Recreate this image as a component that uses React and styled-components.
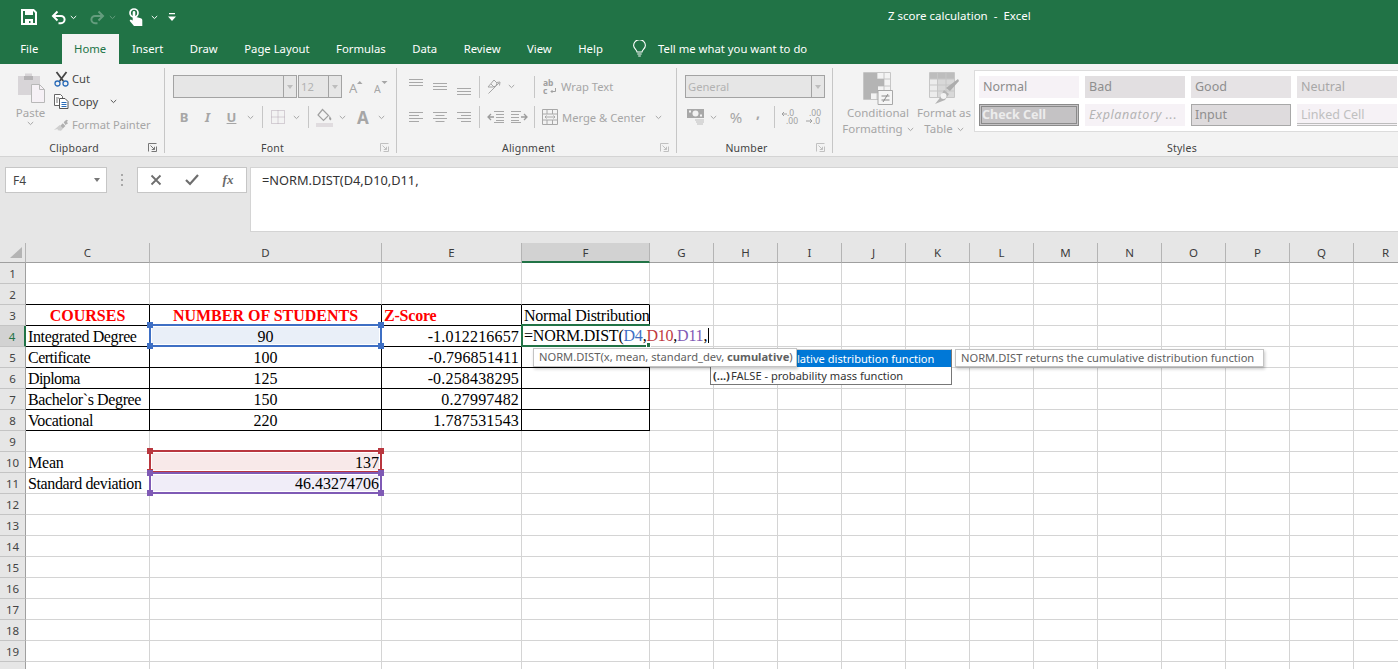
import React from 'react';
import styled, { createGlobalStyle } from 'styled-components';

const UI_FONT = '"Noto Sans", "Open Sans", sans-serif';
const SHEET_FONT = '"Liberation Serif", "Times New Roman", serif';

const GlobalStyle = createGlobalStyle`
  html, body {
    margin: 0;
    height: 100%;
    overflow: hidden;
    background: #fff;
    font-family: ${UI_FONT};
  }
  * { box-sizing: border-box; }
`;

const Page = styled.div`
  width: 1398px;
  height: 669px;
  display: flex;
  flex-direction: column;
  overflow: hidden;
`;

/* title + tabs */
const Head = styled.header`
  background: #217346;
  color: #fff;
  height: 64px;
  flex: none;
`;

const TitleRow = styled.div`
  height: 34px;
  display: flex;
  align-items: center;
  padding-left: 21px;
`;

const Qat = styled.div`
  display: flex;
  align-items: center;
  width: 867px;
  height: 16px;
`;

const QatSlot = styled.span`
  width: ${(p) => p.$w}px;
  flex: none;
  display: flex;
  align-items: center;
  justify-content: center;
  opacity: ${(p) => (p.$dim ? 0.3 : 1)};
`;

const Title = styled.div`
  font-size: 11.5px;
  white-space: pre;
  margin-top: -3px;
`;

const TabRow = styled.nav`
  height: 30px;
  display: flex;
  padding-left: 7px;
`;

const Tab = styled.div`
  height: 30px;
  padding: 0 ${(p) => (p.$active ? 12.5 : 13.25)}px 2px;
  margin-left: ${(p) => (p.$active ? 10 : 0)}px;
  font-size: 11.3px;
  display: flex;
  align-items: center;
  white-space: nowrap;
  background: ${(p) => (p.$active ? '#f3f3f3' : 'transparent')};
  color: ${(p) => (p.$active ? '#217346' : '#fff')};
`;

const TellMe = styled.div`
  display: flex;
  align-items: center;
  gap: 12px;
  margin-left: 17px;
  font-size: 11.3px;
  padding-bottom: 2px;
`;

/* ribbon */
const Ribbon = styled.section`
  height: 93px;
  flex: none;
  display: flex;
  background: #f3f3f3;
  border-bottom: 1px solid #d4d4d4;
  overflow: hidden;
`;

const Group = styled.div`
  width: ${(p) => p.$w}px;
  flex: none;
  display: flex;
  flex-direction: column;
  padding: 4px 0 0;
  position: relative;
`;

const GroupEdge = styled.div`
  width: 1px;
  flex: none;
  margin: 4px 0 3px;
  background: #c6c6c6;
`;

const GroupBody = styled.div`
  flex: 1;
  display: ${(p) => (p.$flex ? 'flex' : 'block')};
  padding: 0 0 0 ${(p) => p.$pad || 0}px;
  color: #a6a6a6;
`;

const GroupFoot = styled.div`
  height: 17px;
  display: flex;
  align-items: center;
`;

const GroupLabel = styled.div`
  flex: 1;
  text-align: center;
  font-size: 10.5px;
  letter-spacing: 0.2px;
  color: #444;
`;

const Launcher = styled.span`
  width: 16px;
  flex: none;
  display: flex;
`;

const ToolRow = styled.div`
  display: flex;
  align-items: center;
  height: ${(p) => p.$h}px;
  margin-top: ${(p) => p.$top || 0}px;
`;

const Tool = styled.span`
  width: ${(p) => p.$w}px;
  flex: none;
  display: flex;
  align-items: center;
  justify-content: center;
  font-size: ${(p) => p.$size || 12}px;
  font-weight: ${(p) => (p.$bold ? 700 : 400)};
  font-style: ${(p) => (p.$italic ? 'italic' : 'normal')};
  text-decoration: ${(p) => (p.$under ? 'underline' : 'none')};
  transform: translateY(${(p) => -(p.$lift || 0)}px);
  color: #a6a6a6;
`;

const Sep = styled.span`
  width: 1px;
  height: 22px;
  flex: none;
  background: #c6c6c6;
  margin: 0 ${(p) => p.$r}px 0 ${(p) => p.$l}px;
`;

const ToolText = styled.span`
  font-size: 11.2px;
  white-space: nowrap;
  color: #a6a6a6;
  margin: 0 ${(p) => p.$r || 0}px 0 ${(p) => p.$l || 0}px;
`;

const Combo = styled.div`
  width: ${(p) => p.$w}px;
  height: 23px;
  flex: none;
  display: flex;
  background: #e6e6e6;
  border: 1px solid #a3a3a3;
  margin-right: ${(p) => p.$mr || 0}px;
`;

const ComboValue = styled.div`
  flex: 1;
  font-size: 11.2px;
  line-height: 21px;
  padding-left: 2px;
  color: #b2b2b2;
`;

const ComboArrow = styled.div`
  width: 13px;
  flex: none;
  border-left: 1px solid #a3a3a3;
  display: flex;
  align-items: center;
  justify-content: center;
`;

const Caret = styled.i`
  width: 0;
  height: 0;
  border-left: 3.5px solid transparent;
  border-right: 3.5px solid transparent;
  border-top: 4px solid ${(p) => p.$color || '#bdbdbd'};
`;

const PasteColumn = styled.div`
  width: 53px;
  flex: none;
  padding: 4px 0 0 8px;
  display: flex;
  flex-direction: column;
  align-items: center;
  font-size: 11.5px;
  color: #a6a6a6;
`;

const PasteLabel = styled.span`
  margin-top: 2px;
  line-height: 16px;
`;

const SmallColumn = styled.div`
  margin-top: -1px;
`;

const SmallRow = styled.div`
  height: 23px;
  display: flex;
  align-items: center;
  font-size: 11.2px;
  white-space: nowrap;
  color: ${(p) => (p.$off ? '#a6a6a6' : '#444')};
  span + span { margin-left: 3px; }
`;

const BigButton = styled.div`
  width: ${(p) => p.$w}px;
  flex: none;
  padding-top: 4px;
  display: flex;
  flex-direction: column;
  align-items: center;
  font-size: 11.5px;
  line-height: 16px;
  color: #a6a6a6;
  text-align: center;
`;

const BigLine = styled.div`
  display: flex;
  align-items: center;
  gap: 4px;
  white-space: nowrap;
`;

const Gallery = styled.div`
  margin: 2px 0 0 3px;
  width: 560px;
  height: 62px;
  padding: 5px 4px;
  background: #fff;
  border: 1px solid #dcdcdc;
  display: grid;
  grid-template-columns: repeat(5, 100px);
  grid-auto-rows: 22px;
  gap: 6px;
`;

const variants = {
  normal: 'background:#f6f2f6;color:#8c8c8c;',
  bad: 'background:#e2dfe1;color:#8e8e8e;',
  good: 'background:#e6e3e5;color:#8e8e8e;',
  neutral: 'background:#e8e5e7;color:#a8a8a8;',
  check: 'background:#c4c2c4;color:#ececec;font-weight:700;border:3px double #8a8a8a;line-height:16px;padding-left:0;',
  note: 'background:#f6f2f6;color:#b4b4b4;font-style:italic;letter-spacing:0.6px;',
  input: 'background:#dedbdd;color:#8e8e8e;border:1px solid #a8a8a8;line-height:20px;padding-left:3px;',
  linked: 'background:#f6f2f6;color:#c0c0c0;border-bottom:3px double #bdbdbd;line-height:22px;',
};

const StyleCell = styled.div`
  font-size: 12.5px;
  line-height: 22px;
  padding-left: 4px;
  white-space: nowrap;
  ${(p) => variants[p.$kind]}
`;

/* formula bar */
const FormulaBar = styled.div`
  height: 86px;
  flex: none;
  display: flex;
  align-items: flex-start;
  padding: 10px 0 0 5px;
  background: #e6e6e6;
`;

const NameBox = styled.div`
  width: 102px;
  height: 26px;
  flex: none;
  display: flex;
  align-items: center;
  justify-content: space-between;
  padding: 0 6px 0 7px;
  font-size: 12px;
  color: #444;
  background: #fff;
  border: 1px solid #c6c6c6;
`;

const Grip = styled.div`
  width: 30px;
  height: 26px;
  flex: none;
  display: flex;
  align-items: center;
  justify-content: center;
`;

const FxBox = styled.div`
  width: 110px;
  height: 26px;
  flex: none;
  display: flex;
  align-items: center;
  background: #fff;
  border: 1px solid #c6c6c6;
`;

const FxSlot = styled.span`
  width: 36px;
  flex: none;
  display: flex;
  justify-content: center;
  font: italic 700 13px ${SHEET_FONT};
  color: #6a6a6a;
`;

const FormulaInput = styled.div`
  flex: 1;
  height: 65px;
  margin-left: 3px;
  padding: 4px 11px;
  font-size: 12.8px;
  line-height: 16px;
  color: #333;
  background: #fff;
  border: 1px solid #d4d4d4;
  border-right: none;
`;

/* sheet */
const Sheet = styled.div`
  position: relative;
  flex: 1;
  overflow: hidden;
  display: grid;
  grid-template-columns: 26px 124px 232px 140px 128px repeat(12, 64px);
  grid-template-rows: 20px;
  grid-auto-rows: 21px;
  background: #fff;
`;

const Corner = styled.div`
  background: #e6e6e6;
  border-right: 1px solid #b4b4b4;
  border-bottom: 1px solid #9f9f9f;
  display: flex;
  align-items: flex-end;
  justify-content: flex-end;
  padding: 0 3px 4px 0;
`;

const ColHead = styled.div`
  font-size: 11.5px;
  line-height: 19px;
  text-align: center;
  color: #3c3c3c;
  background: ${(p) => (p.$active ? '#d2d2d2' : '#e6e6e6')};
  border-right: 1px solid #b4b4b4;
  border-bottom: ${(p) => (p.$active ? '2px solid #217346' : '1px solid #9f9f9f')};
`;

const RowHead = styled.div`
  font-size: 11.5px;
  line-height: 22px;
  text-align: center;
  color: ${(p) => (p.$active ? '#217346' : '#444')};
  background: ${(p) => (p.$active ? '#d2d2d2' : '#e6e6e6')};
  border-right: ${(p) => (p.$active ? '2px solid #217346' : '1px solid #9f9f9f')};
  border-bottom: 1px solid #c4c4c4;
`;

const Cell = styled.div`
  font-family: ${SHEET_FONT};
  font-size: 16px;
  line-height: 21px;
  padding: 0 2px;
  white-space: nowrap;
  letter-spacing: ${(p) => p.$spacing || 0}px;
  text-align: ${(p) => p.$align || 'left'};
  font-weight: ${(p) => (p.$head ? 700 : 400)};
  color: ${(p) => (p.$head ? '#ff0000' : '#000')};
  background: ${(p) => p.$tint || '#fff'};
  border-right: 1px solid ${(p) => (p.$boxed ? '#000' : '#d4d4d4')};
  border-bottom: 1px solid ${(p) => (p.$boxed || p.$above ? '#000' : '#d4d4d4')};
`;

const Range = styled.div`
  position: absolute;
  left: ${(p) => p.$left}px;
  top: ${(p) => p.$top}px;
  width: ${(p) => p.$w}px;
  height: ${(p) => p.$h}px;
  border: 2px solid ${(p) => p.$color};
  box-shadow: inset 0 0 0 1px #fff;
  pointer-events: none;
`;

const Handle = styled.i`
  position: absolute;
  width: 6px;
  height: 6px;
  background: ${(p) => p.$color};
  left: ${(p) => (p.$right ? 'auto' : '-4px')};
  right: ${(p) => (p.$right ? '-4px' : 'auto')};
  top: ${(p) => (p.$bottom ? 'auto' : '-4px')};
  bottom: ${(p) => (p.$bottom ? '-4px' : 'auto')};
`;

const Editor = styled.div`
  position: absolute;
  left: 521px;
  top: 81px;
  width: 129px;
  height: 23px;
  padding-left: 1px;
  background: #fff;
  border: 2px solid #217346;
  border-right: none;
  font-family: ${SHEET_FONT};
  font-size: 16px;
  letter-spacing: -0.22px;
  line-height: 20px;
  white-space: nowrap;
  color: #000;
`;

const Ref = styled.span`
  color: ${(p) => p.$color};
`;

const EditCaret = styled.i`
  display: inline-block;
  width: 1px;
  height: 15px;
  margin-left: 1px;
  vertical-align: -2px;
  background: #000;
`;

const EditHandle = styled.i`
  position: absolute;
  right: -1px;
  bottom: -3px;
  width: 5px;
  height: 5px;
  background: #217346;
  border: 1px solid #fff;
  border-top: none;
`;

const ScreenTip = styled.div`
  position: absolute;
  left: ${(p) => p.$left}px;
  top: ${(p) => p.$top}px;
  height: ${(p) => p.$h}px;
  width: ${(p) => p.$w}px;
  padding-left: 5px;
  z-index: 3;
  font-size: 11.15px;
  line-height: 16px;
  white-space: nowrap;
  color: #606060;
  background: #fff;
  border: 1px solid #c4c4c4;
  box-shadow: 1px 2px 3px rgba(0, 0, 0, 0.22);
  b { font-weight: 700; }
`;

const AutoList = styled.div`
  position: absolute;
  left: 710px;
  top: 106px;
  width: 242px;
  height: 36px;
  z-index: 2;
  background: #fff;
  border: 1px solid #777;
  border-top-color: #cfcfcf;
  font-size: 11.1px;
`;

const AutoItem = styled.div`
  height: 17px;
  line-height: 17px;
  padding-left: 2px;
  white-space: nowrap;
  color: ${(p) => (p.$on ? '#fff' : '#333')};
  background: ${(p) => (p.$on ? '#0078d7' : 'transparent')};
  strong { font-weight: 700; margin-right: 1px; }
`;

/* drawn icons */
const Glyph = styled.svg`
  display: block;
  flex: none;
`;

const Chev = ({ color = '#a6a6a6' }) => (
  <Glyph width="7" height="5" viewBox="0 0 7 5" fill="none" stroke={color} strokeWidth="1">
    <path d="M.8 1l2.7 2.6L6.2 1" />
  </Glyph>
);

const SaveIcon = () => (
  <Glyph width="16" height="16" viewBox="0 0 16 16">
    <path d="M1 1h11.5L15 3.5V15H1z" fill="none" stroke="#fff" strokeWidth="2" />
    <path d="M4 1h8v5H4zM4 10h8v5H9.5v-3H8v3H4z" fill="#fff" />
  </Glyph>
);

const UndoIcon = ({ flip }) => (
  <Glyph width="16" height="15" viewBox="0 0 16 15" fill="none" stroke="#fff" strokeWidth="2" transform={flip ? 'scale(-1 1)' : undefined}>
    <path d="M6.5 1.5L2 6l4.5 4.5M2.5 6H10a3.6 3.6 0 0 1 0 7.2H7.5" />
  </Glyph>
);

const TouchIcon = () => (
  <Glyph width="14" height="19" viewBox="0 0 14 19">
    <circle cx="5" cy="5" r="4" fill="none" stroke="#fff" strokeWidth="1.7" />
    <path d="M3.7 4.3a1.3 1.3 0 0 1 2.6 0v4.4l5.4 1.5c1 .3 1.6 1 1.6 2V18H5L.6 12.800l1-1.300 2.100 1z" fill="#fff" />
  </Glyph>
);

const QatMore = () => (
  <Glyph width="8" height="8" viewBox="0 0 8 8" fill="#fff">
    <path d="M1 0h6v1.300H1zM0 3.500h8L4 8z" />
  </Glyph>
);

const BulbIcon = () => (
  <Glyph width="13" height="17" viewBox="0 0 13 17" fill="none" stroke="#fff" strokeWidth="1.100">
    <path d="M4 12c0-2-3.400-3.500-3.400-6.500a5.900 5.900 0 0 1 11.800 0C12.400 8.500 9 10 9 12zM4.300 14h4.400M5.200 16h2.600" />
  </Glyph>
);

const LauncherIcon = ({ color = '#777' }) => (
  <Glyph width="9" height="9" viewBox="0 0 9 9" fill="none" stroke={color} strokeWidth="1">
    <path d="M.5 8.500V.5h8M8.500 3.500v5h-5M2.500 2.500l4 4M6.500 3.800v2.700H3.800" />
  </Glyph>
);

const PasteIcon = () => (
  <Glyph width="30" height="31" viewBox="0 0 30 31">
    <path d="M2 4h7V1.500h7V4h8v19H2z" fill="#d8d5d8" />
    <path d="M8 4h9v4H8z" fill="#b5b3b5" />
    <path d="M15.500 12.500h8l5 5v13h-13z" fill="#f6f1f6" stroke="#b8b8b8" />
    <path d="M23.500 12.500v5h5" fill="none" stroke="#b8b8b8" />
  </Glyph>
);

const ScissorsIcon = () => (
  <Glyph width="15" height="16" viewBox="0 0 15 16" fill="none">
    <path d="M2.500 1l6.800 9M12.500 1L5.700 10" stroke="#444" strokeWidth="1.800" />
    <circle cx="3.500" cy="12.500" r="2.500" stroke="#2b6cb8" strokeWidth="1.300" />
    <circle cx="11.500" cy="12.500" r="2.500" stroke="#2b6cb8" strokeWidth="1.300" />
  </Glyph>
);

const CopyIcon = () => (
  <Glyph width="15" height="15" viewBox="0 0 15 15" fill="none">
    <path d="M.5.5h6l2 2v9H.5z" fill="#fff" stroke="#666" />
    <path d="M5.500 4.500h5.500l3 3v7H5.500z" fill="#fff" stroke="#555" />
    <path d="M7.500 8.500h5M7.500 10.500h5M7.500 12.500h5" stroke="#2b6cb8" />
    <path d="M2 4h3M2 6h2M2 8h2" stroke="#777" />
  </Glyph>
);

const BrushIcon = () => (
  <Glyph width="16" height="14" viewBox="0 0 18 14">
    <path d="M12 4l3-3 2 1-1.500 1.500L17 5l-3 2zM11 5l3 3-3 3-3-3z" fill="#b0b0b0" />
    <path d="M7.500 7l4 4-2.500 2.500-3.500-.5-.5-1.500L1 12.500z" fill="#cfcfcf" />
  </Glyph>
);

const GrowIcon = ({ small }) => (
  <Glyph width="14" height="14" viewBox="0 0 14 14">
    <text x="0" y="13" fontFamily="Noto Sans" fontSize={small ? 10.500 : 13} fill="#a6a6a6">A</text>
    <path d={small ? 'M7.500 1h6L10.500 4z' : 'M8 4h5.500l-2.750-3z'} fill="#a6a6a6" />
  </Glyph>
);

const BordersIcon = () => (
  <Glyph width="14" height="14" viewBox="0 0 14 14" fill="none" stroke="#b4a9b4" strokeDasharray="1 1">
    <path d="M.5.500h13v13H.500zM7 .500v13M.500 7h13" />
  </Glyph>
);

const FillIcon = () => (
  <Glyph width="17" height="19" viewBox="0 0 17 19">
    <path d="M6.500 1.500l6 6-5 5-5.500-5.500z" fill="#f3f3f3" stroke="#a0a0a0" strokeWidth="1.200" />
    <path d="M13.500 7.500l2 3.500-1 1.500-1.500-1.500z" fill="#a0a0a0" />
    <path d="M0 15h17v4H0z" fill="#e0dcdf" />
  </Glyph>
);

const LinesIcon = ({ rows, anchor = 'left', h = 16 }) => {
  const spans = { left: [1, 11], center: [3.500, 12.500], right: [5, 15] };
  return (
    <Glyph width="16" height={h} viewBox={`0 0 16 ${h}`} stroke="#a8a8a8">
      {rows.map((y, i) => {
        const inset = anchor === 'full' || !(i % 2) ? [1, 15] : spans[anchor];
        return <line key={y} x1={inset[0]} x2={inset[1]} y1={y} y2={y} />;
      })}
    </Glyph>
  );
};

const OrientIcon = () => (
  <Glyph width="17" height="17" viewBox="0 0 17 17" fill="none" stroke="#a6a6a6">
    <path d="M1 9l6-7 3 3-1 3-3 1zM4 6l3 3M1.500 15.500L12 5M9.500 4.500L13 4l-.5 3.500" />
  </Glyph>
);

const IndentIcon = ({ flip }) => (
  <Glyph width="17" height="12" viewBox="0 0 17 12" stroke="#a8a8a8" transform={flip ? 'scale(-1 1)' : undefined} fill="none">
    <path d="M7 .500h10M9 3.500h8M9 6.500h8M9 9.500h8M7 11.500h10" />
    <path d="M7 6H1.500M4 3L1 6l3 3" stroke="#9c9c9c" strokeWidth="1.300" />
  </Glyph>
);

const WrapIcon = () => (
  <Glyph width="14" height="16" viewBox="0 0 14 16">
    <text x="0" y="7" fontFamily="Noto Sans" fontWeight="700" fontSize="8.500" fill="#a0a0a0">ab</text>
    <text x="0" y="15" fontFamily="Noto Sans" fontWeight="700" fontSize="8.500" fill="#a0a0a0">c</text>
    <path d="M12.500 9v3.500H8M9.500 11L8 12.500 9.500 14" fill="none" stroke="#a0a0a0" />
  </Glyph>
);

const MergeIcon = () => (
  <Glyph width="16" height="16" viewBox="0 0 16 16" fill="none" stroke="#a8a8a8">
    <path d="M.5.500h15v15H.500zM.500 5h15M.500 11h15M5 .500V5M10.500.500V5M5 11v4.500M10.500 11v4.500" />
    <path d="M3 8h10M4.500 6.500L3 8l1.500 1.500M11.500 6.500L13 8l-1.500 1.500" />
  </Glyph>
);

const MoneyIcon = () => (
  <Glyph width="18" height="18" viewBox="0 0 18 18">
    <path d="M0 1h17v9H0z" fill="#a8a8a8" />
    <circle cx="8.500" cy="5.500" r="3" fill="#f3f3f3" />
    <path d="M2 2.500h2v2H2zM13 6.500h2v2h-2z" fill="#f3f3f3" />
    <path d="M8 12h9M9 14h8M10 16h6" stroke="#cfcfcf" strokeWidth="1.500" />
  </Glyph>
);

const DecimalIcon = ({ more }) => (
  <Glyph width="17" height="16" viewBox="0 0 17 16">
    <text x={more ? 3 : 5} y="7" fontFamily="Noto Sans" fontSize="8.500" fill="#a0a0a0">{more ? '.00' : '.0'}</text>
    <text x={more ? 7 : 4} y="15" fontFamily="Noto Sans" fontSize="8.500" fill="#a0a0a0">{more ? '.0' : '.00'}</text>
    <path
      d={more ? 'M0 12h6M4 10l2 2-2 2' : 'M0 5h5M2 3L0 5l2 2'}
      fill="none"
      stroke="#a0a0a0"
    />
  </Glyph>
);

const ConditionalIcon = () => (
  <Glyph width="30" height="33" viewBox="0 0 30 33">
    <path d="M.5.500h27v27H.500z" fill="#f3f3f3" stroke="#c6c6c6" />
    <path d="M.500 7h27M.500 14h27M.500 21h27M7 .500v27M14 .500v27M21 .500v27" stroke="#c6c6c6" />
    <path d="M1 1h13v6H1zM1 7h20v7H1zM1 14h14v7H1zM1 21h7v6H1z" fill="#b4b4b4" />
    <path d="M15 18.500h14.500v14H15z" fill="#f6f6f6" stroke="#a8a8a8" />
    <path d="M18.500 24h8M18.500 28h8M25 22l-5 8" stroke="#8c8c8c" />
  </Glyph>
);

const TableIcon = () => (
  <Glyph width="30" height="33" viewBox="0 0 30 33">
    <path d="M.5.500h25v25H.500z" fill="#ececec" stroke="#c6c6c6" />
    <path d="M1 1h24v6H1z" fill="#bdbdbd" />
    <path d="M9 7h16v18H9z" fill="#d8d8d8" />
    <path d="M.500 7h25M.500 13h25M.500 19h25M8.500.500v25M17 .500v25" stroke="#c6c6c6" />
    <path d="M29 7l1 2-9 10-4-3z" fill="#adadad" />
    <path d="M15 18l5 4-4 6-10 4 4-5z" fill="#b4b4b4" />
    <circle cx="14.500" cy="24" r="3" fill="#f3f3f3" />
  </Glyph>
);

const CrossIcon = () => (
  <Glyph width="12" height="12" viewBox="0 0 12 12" stroke="#6e6e6e" strokeWidth="1.800">
    <path d="M1.500 1.500l9 9M10.500 1.500l-9 9" />
  </Glyph>
);

const CheckIcon = () => (
  <Glyph width="14" height="12" viewBox="0 0 14 12" fill="none" stroke="#6e6e6e" strokeWidth="2.200">
    <path d="M1 6l4 4 8-9" />
  </Glyph>
);

const GripDots = () => (
  <Glyph width="3" height="12" viewBox="0 0 3 12" fill="#a8a8a8">
    <path d="M0 0h2v2H0zM0 5h2v2H0zM0 10h2v2H0z" />
  </Glyph>
);

const CornerMark = () => (
  <Glyph width="12" height="11" viewBox="0 0 12 11" fill="#b4b4b4">
    <path d="M12 0v11H0z" />
  </Glyph>
);

/* data */
const COLUMNS = ['C', 'D', 'E', 'F', 'G', 'H', 'I', 'J', 'K', 'L', 'M', 'N', 'O', 'P', 'Q', 'R'];
const ROWS = Array.from({ length: 20 }, (_, i) => i + 1);
const TABLE_COLUMNS = ['C', 'D', 'E', 'F'];
const TIGHT = -0.38;
const LOOSE = 0.17;

const CELLS = {
  C3: { text: 'COURSES', head: true, align: 'center' },
  D3: { text: 'NUMBER OF STUDENTS', head: true, align: 'center' },
  E3: { text: 'Z-Score', head: true, spacing: -0.2 },
  F3: { text: 'Normal Distribution', spacing: -0.25 },
  C4: { text: 'Integrated Degree', spacing: TIGHT },
  D4: { text: '90', align: 'center', tint: '#e9eff8' },
  E4: { text: '-1.012216657', align: 'right', spacing: LOOSE },
  C5: { text: 'Certificate', spacing: -0.5 },
  D5: { text: '100', align: 'center' },
  E5: { text: '-0.796851411', align: 'right', spacing: LOOSE },
  C6: { text: 'Diploma', spacing: -0.6 },
  D6: { text: '125', align: 'center' },
  E6: { text: '-0.258438295', align: 'right', spacing: LOOSE },
  C7: { text: 'Bachelor`s Degree', spacing: TIGHT },
  D7: { text: '150', align: 'center' },
  E7: { text: '0.27997482', align: 'right', spacing: LOOSE },
  C8: { text: 'Vocational', spacing: -0.3 },
  D8: { text: '220', align: 'center' },
  E8: { text: '1.787531543', align: 'right', spacing: LOOSE },
  C10: { text: 'Mean', spacing: -0.2 },
  D10: { text: '137', align: 'right', tint: '#f8e9e9' },
  C11: { text: 'Standard deviation', spacing: TIGHT },
  D11: { text: '46.43274706', align: 'right', tint: '#f0edf8' },
};

const RANGES = [
  { id: 'x', left: 149, top: 81, w: 233, h: 23, color: '#3e6fc4' },
  { id: 'mean', left: 149, top: 207, w: 233, h: 23, color: '#b9373f' },
  { id: 'sd', left: 149, top: 229, w: 233, h: 22, color: '#7f5ab5' },
];

const TABS = ['File', 'Home', 'Insert', 'Draw', 'Page Layout', 'Formulas', 'Data', 'Review', 'View', 'Help'];

const STYLE_CELLS = [
  ['normal', 'Normal'],
  ['bad', 'Bad'],
  ['good', 'Good'],
  ['neutral', 'Neutral'],
  ['normal', ''],
  ['check', 'Check Cell'],
  ['note', 'Explanatory ...'],
  ['input', 'Input'],
  ['linked', 'Linked Cell'],
  ['normal', ''],
];

const ClipboardGroup = () => (
  <Group $w={164}>
    <GroupBody $flex>
      <PasteColumn>
        <PasteIcon />
        <PasteLabel>Paste</PasteLabel>
        <Chev />
      </PasteColumn>
      <SmallColumn>
        <SmallRow><Tool $w={16}><ScissorsIcon /></Tool><span>Cut</span></SmallRow>
        <SmallRow><Tool $w={16}><CopyIcon /></Tool><span>Copy</span><Tool $w={24}><Chev color="#555" /></Tool></SmallRow>
        <SmallRow $off><Tool $w={16}><BrushIcon /></Tool><span>Format Painter</span></SmallRow>
      </SmallColumn>
    </GroupBody>
    <GroupFoot>
      <GroupLabel>Clipboard</GroupLabel>
      <Launcher><LauncherIcon /></Launcher>
    </GroupFoot>
  </Group>
);

const FontGroup = () => (
  <Group $w={231}>
    <GroupBody $pad={8}>
      <ToolRow $h={23} $top={7}>
        <Combo $w={124} $mr={1}><ComboValue /><ComboArrow><Caret /></ComboArrow></Combo>
        <Combo $w={44}><ComboValue>12</ComboValue><ComboArrow><Caret /></ComboArrow></Combo>
        <Tool $w={27}><GrowIcon /></Tool>
        <Tool $w={23}><GrowIcon small /></Tool>
      </ToolRow>
      <ToolRow $h={26} $top={6}>
        <Tool $w={22} $bold $size={13}>B</Tool>
        <Tool $w={25} $italic $bold $size={13}>I</Tool>
        <Tool $w={23} $under $bold $size={13}>U</Tool>
        <Tool $w={15}><Chev /></Tool>
        <Sep $l={4} $r={4} />
        <Tool $w={22}><BordersIcon /></Tool>
        <Tool $w={15}><Chev /></Tool>
        <Sep $l={4} $r={4} />
        <Tool $w={22}><FillIcon /></Tool>
        <Tool $w={14}><Chev /></Tool>
        <Tool $w={28} $bold $size={17}>A</Tool>
        <Tool $w={8}><Chev /></Tool>
      </ToolRow>
    </GroupBody>
    <GroupFoot>
      <GroupLabel>Font</GroupLabel>
      <Launcher><LauncherIcon color="#c0c0c0" /></Launcher>
    </GroupFoot>
  </Group>
);

const AlignmentGroup = () => (
  <Group $w={279}>
    <GroupBody $pad={7}>
      <ToolRow $h={23} $top={7}>
        <Tool $w={24}><LinesIcon rows={[0.5, 3.5, 6.5]} anchor="full" /></Tool>
        <Tool $w={24}><LinesIcon rows={[4.5, 7.5, 10.5]} anchor="full" /></Tool>
        <Tool $w={24}><LinesIcon rows={[9.5, 12.5, 15.5]} anchor="full" /></Tool>
        <Sep $l={3} $r={3} />
        <Tool $w={24}><OrientIcon /></Tool>
        <Tool $w={8}><Chev /></Tool>
        <Sep $l={19} $r={8} />
        <Tool $w={14}><WrapIcon /></Tool>
        <ToolText $l={4}>Wrap Text</ToolText>
      </ToolRow>
      <ToolRow $h={26} $top={6}>
        <Tool $w={24}><LinesIcon rows={[2.5, 5.5, 8.5, 11.5]} anchor="left" h={14} /></Tool>
        <Tool $w={24}><LinesIcon rows={[2.5, 5.5, 8.5, 11.5]} anchor="center" h={14} /></Tool>
        <Tool $w={24}><LinesIcon rows={[2.5, 5.5, 8.5, 11.5]} anchor="right" h={14} /></Tool>
        <Sep $l={3} $r={3} />
        <Tool $w={24}><IndentIcon /></Tool>
        <Tool $w={24}><IndentIcon flip /></Tool>
        <Sep $l={3} $r={7} />
        <Tool $w={16}><MergeIcon /></Tool>
        <ToolText $l={4} $r={10}>Merge &amp; Center</ToolText>
        <Chev />
      </ToolRow>
    </GroupBody>
    <GroupFoot>
      <GroupLabel>Alignment</GroupLabel>
      <Launcher><LauncherIcon color="#c0c0c0" /></Launcher>
    </GroupFoot>
  </Group>
);

const NumberGroup = () => (
  <Group $w={155}>
    <GroupBody $pad={8}>
      <ToolRow $h={23} $top={7}>
        <Combo $w={140}><ComboValue>General</ComboValue><ComboArrow><Caret /></ComboArrow></Combo>
      </ToolRow>
      <ToolRow $h={26} $top={6}>
        <Tool $w={22}><MoneyIcon /></Tool>
        <Tool $w={12}><Chev /></Tool>
        <Tool $w={34} $size={15}>%</Tool>
        <Tool $w={10} $bold $size={14} $lift={5}>,</Tool>
        <Sep $l={11} $r={7} />
        <Tool $w={16}><DecimalIcon /></Tool>
        <Tool $w={8} />
        <Tool $w={16}><DecimalIcon more /></Tool>
      </ToolRow>
    </GroupBody>
    <GroupFoot>
      <GroupLabel>Number</GroupLabel>
      <Launcher><LauncherIcon color="#c0c0c0" /></Launcher>
    </GroupFoot>
  </Group>
);

const StylesGroup = () => (
  <Group $w={698}>
    <GroupBody $flex $pad={6}>
      <BigButton $w={78}>
        <ConditionalIcon />
        <div>Conditional</div>
        <BigLine>Formatting <Chev /></BigLine>
      </BigButton>
      <BigButton $w={54}>
        <TableIcon />
        <div>Format as</div>
        <BigLine>Table <Chev /></BigLine>
      </BigButton>
      <Gallery>
        {STYLE_CELLS.map(([kind, label], i) => (
          <StyleCell key={i} $kind={kind}>{label}</StyleCell>
        ))}
      </Gallery>
    </GroupBody>
    <GroupFoot>
      <GroupLabel>Styles</GroupLabel>
    </GroupFoot>
  </Group>
);

const App = () => (
  <Page>
    <GlobalStyle />
    <Head>
      <TitleRow>
        <Qat>
          <QatSlot $w={16}><SaveIcon /></QatSlot>
          <QatSlot $w={14} />
          <QatSlot $w={16}><UndoIcon /></QatSlot>
          <QatSlot $w={12}><Chev color="#fff" /></QatSlot>
          <QatSlot $w={10} />
          <QatSlot $w={16} $dim><UndoIcon flip /></QatSlot>
          <QatSlot $w={14} $dim><Chev color="#fff" /></QatSlot>
          <QatSlot $w={9} />
          <QatSlot $w={16}><TouchIcon /></QatSlot>
          <QatSlot $w={21}><Chev color="#fff" /></QatSlot>
          <QatSlot $w={14}><QatMore /></QatSlot>
        </Qat>
        <Title>Z score calculation  -  Excel</Title>
      </TitleRow>
      <TabRow>
        {TABS.map((tab) => (
          <Tab key={tab} $active={tab === 'Home'}>{tab}</Tab>
        ))}
        <TellMe><BulbIcon />Tell me what you want to do</TellMe>
      </TabRow>
    </Head>

    <Ribbon>
      <ClipboardGroup />
      <GroupEdge />
      <FontGroup />
      <GroupEdge />
      <AlignmentGroup />
      <GroupEdge />
      <NumberGroup />
      <GroupEdge />
      <StylesGroup />
    </Ribbon>

    <FormulaBar>
      <NameBox>F4<Caret $color="#777" /></NameBox>
      <Grip><GripDots /></Grip>
      <FxBox>
        <FxSlot><CrossIcon /></FxSlot>
        <FxSlot><CheckIcon /></FxSlot>
        <FxSlot>fx</FxSlot>
      </FxBox>
      <FormulaInput>=NORM.DIST(D4,D10,D11,</FormulaInput>
    </FormulaBar>

    <Sheet>
      <Corner><CornerMark /></Corner>
      {COLUMNS.map((col) => (
        <ColHead key={col} $active={col === 'F'}>{col}</ColHead>
      ))}
      {ROWS.map((row) => (
        <React.Fragment key={row}>
          <RowHead $active={row === 4}>{row}</RowHead>
          {COLUMNS.map((col) => {
            const cell = CELLS[`${col}${row}`] || {};
            const inTable = TABLE_COLUMNS.includes(col);
            return (
              <Cell
                key={col}
                $align={cell.align}
                $head={cell.head}
                $tint={cell.tint}
                $spacing={cell.spacing}
                $boxed={inTable && row >= 3 && row <= 8}
                $above={inTable && row === 2}
              >
                {cell.text}
              </Cell>
            );
          })}
        </React.Fragment>
      ))}

      {RANGES.map((range) => (
        <Range key={range.id} $left={range.left} $top={range.top} $w={range.w} $h={range.h} $color={range.color}>
          <Handle $color={range.color} />
          <Handle $color={range.color} $right />
          <Handle $color={range.color} $bottom />
          <Handle $color={range.color} $right $bottom />
        </Range>
      ))}

      <Editor>
        =NORM.DIST(<Ref $color="#3e6fc4">D4</Ref>,<Ref $color="#c0393f">D10</Ref>,<Ref $color="#7f5ab5">D11</Ref>,<EditCaret />
        <EditHandle />
      </Editor>

      <AutoList>
        <AutoItem $on><strong>(...)</strong>TRUE - cumulative distribution function</AutoItem>
        <AutoItem><strong>(...)</strong>FALSE - probability mass function</AutoItem>
      </AutoList>
      <ScreenTip $left={533} $top={105} $w={264} $h={19}>
        NORM.DIST(x, mean, standard_dev, <b>cumulative</b>)
      </ScreenTip>
      <ScreenTip $left={955} $top={106} $w={309} $h={18}>
        NORM.DIST returns the cumulative distribution function
      </ScreenTip>
    </Sheet>
  </Page>
);

export default App;
